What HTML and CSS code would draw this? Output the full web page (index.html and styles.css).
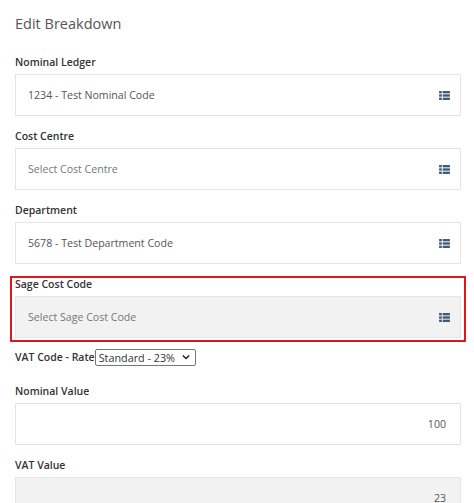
FILE: index.html
```html
<!DOCTYPE html>
<html>
<head>
<meta charset="utf-8">
<link rel="stylesheet" href="styles.css">
</head>
<body>
<div class="page">
  <h1 class="title">Edit Breakdown</h1>

  <div class="group">
    <label class="label">Nominal Ledger</label>
    <div class="field">
      <span class="value">1234 - Test Nominal Code</span>
      <svg class="icon" viewBox="0 0 12 10"><rect x="0" y="0" width="3" height="2.6"/><rect x="4" y="0" width="8" height="2.6"/><rect x="0" y="3.7" width="3" height="2.6"/><rect x="4" y="3.7" width="8" height="2.6"/><rect x="0" y="7.4" width="3" height="2.6"/><rect x="4" y="7.4" width="8" height="2.6"/></svg>
    </div>
  </div>

  <div class="group">
    <label class="label">Cost Centre</label>
    <div class="field">
      <span class="placeholder">Select Cost Centre</span>
      <svg class="icon" viewBox="0 0 12 10"><rect x="0" y="0" width="3" height="2.6"/><rect x="4" y="0" width="8" height="2.6"/><rect x="0" y="3.7" width="3" height="2.6"/><rect x="4" y="3.7" width="8" height="2.6"/><rect x="0" y="7.4" width="3" height="2.6"/><rect x="4" y="7.4" width="8" height="2.6"/></svg>
    </div>
  </div>

  <div class="group">
    <label class="label">Department</label>
    <div class="field">
      <span class="value">5678 - Test Department Code</span>
      <svg class="icon" viewBox="0 0 12 10"><rect x="0" y="0" width="3" height="2.6"/><rect x="4" y="0" width="8" height="2.6"/><rect x="0" y="3.7" width="3" height="2.6"/><rect x="4" y="3.7" width="8" height="2.6"/><rect x="0" y="7.4" width="3" height="2.6"/><rect x="4" y="7.4" width="8" height="2.6"/></svg>
    </div>
  </div>

  <div class="group highlight">
    <label class="label">Sage Cost Code</label>
    <div class="field disabled">
      <span class="placeholder">Select Sage Cost Code</span>
      <svg class="icon" viewBox="0 0 12 10"><rect x="0" y="0" width="3" height="2.6"/><rect x="4" y="0" width="8" height="2.6"/><rect x="0" y="3.7" width="3" height="2.6"/><rect x="4" y="3.7" width="8" height="2.6"/><rect x="0" y="7.4" width="3" height="2.6"/><rect x="4" y="7.4" width="8" height="2.6"/></svg>
    </div>
  </div>

  <div class="vat-row">
    <label class="label inline">VAT Code - Rate</label>
    <div class="select">
      <span>Standard - 23%</span>
      <svg class="chev" viewBox="0 0 10 6"><path d="M1 1 L5 5 L9 1" fill="none" stroke="#222" stroke-width="1.8"/></svg>
    </div>
  </div>

  <div class="group">
    <label class="label">Nominal Value</label>
    <div class="field right">
      <span class="value">100</span>
    </div>
  </div>

  <div class="group">
    <label class="label">VAT Value</label>
    <div class="field right disabled">
      <span class="value">23</span>
    </div>
  </div>
</div>
</body>
</html>
```
FILE: styles.css
```css
html, body {
  margin: 0;
  padding: 0;
  background: #fff;
  overflow: hidden;
}
body {
  font-family: "Open Sans", "Liberation Sans", sans-serif;
  color: #333;
}
.page {
  padding: 0 13px 0 15px;
}
.title {
  margin: 0;
  padding-top: 13px;
  height: 54px;
  box-sizing: border-box;
  font-size: 14.5px;
  font-weight: 400;
  color: #555;
  line-height: 22px;
}
.group {
  display: flex;
  flex-direction: column;
  margin-bottom: 12px;
}
.label {
  display: block;
  font-size: 10.5px;
  font-weight: 600;
  color: #333;
  line-height: 16px;
  margin-bottom: 4px;
}
.field {
  height: 42px;
  box-sizing: border-box;
  border: 1px solid #e5e5e5;
  background: #fff;
  display: flex;
  align-items: center;
  justify-content: space-between;
  padding: 0 10px 0 12px;
  font-size: 10.6px;
}
.field.disabled {
  background: #f2f2f2;
}
.field.right {
  justify-content: flex-end;
  padding-right: 14px;
}
.value {
  color: #555;
}
.placeholder {
  color: #777;
}
.icon {
  width: 11px;
  height: 9px;
  fill: #3d5a78;
}
.highlight {
  margin: 0 -5px 5px;
  padding: 0 3px 2px;
  border: 2px solid #e0161e;
}
.highlight .label {
  margin-top: -2px;
}
.vat-row {
  display: flex;
  align-items: center;
  height: 20px;
  margin-bottom: 16px;
}
.label.inline {
  margin: 0;
}
.select {
  box-sizing: border-box;
  width: 101px;
  height: 17px;
  border: 1px solid #767676;
  border-radius: 2px;
  display: flex;
  align-items: center;
  justify-content: space-between;
  padding: 0 5px 0 3px;
  font-size: 10.8px;
  color: #333;
}
.chev {
  width: 8px;
  height: 6px;
}
```
